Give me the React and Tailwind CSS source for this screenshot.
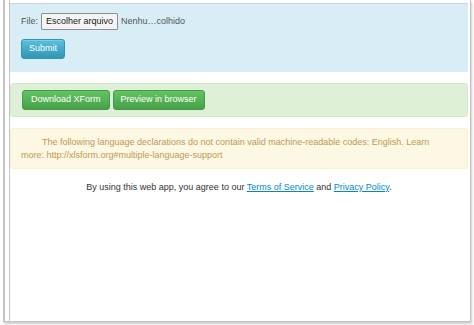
import React from 'react';

const font = { fontFamily: '"Liberation Sans", Arial, sans-serif' };

const App = () => {
  return (
    <div className="w-[474px] h-[325px] bg-white overflow-hidden" style={font}>
      {/* outer window frame */}
      <div className="ml-[3px] mr-[3px] h-[322px] border-l-2 border-r border-b border-[#c4c4c4] shadow-[1px_2px_2px_rgba(0,0,0,0.2)] pl-[4px]">
        <div className="h-full border-l border-[#c6c6c6] pt-[3px] pr-[2px]">
          {/* upload form */}
          <div className="bg-[#d9edf7] border-t border-[#cfd6da] pl-[11px] pt-[9px] pb-[13px]">
            <div className="flex items-center text-[9px] text-[#555]">
              <span className="mr-[3px]">File:</span>
              <span className="border border-[#8f8f8f] bg-[#f4f4f4] text-[#222] text-[9px] leading-none px-[4px] py-[3px] rounded-[1px]">
                Escolher arquivo
              </span>
              <span className="ml-[3px] text-[9px] text-[#555]">Nenhu…colhido</span>
            </div>
            <button className="mt-[9px] h-[20px] px-[7px] rounded-[3px] text-[9px] text-white bg-gradient-to-b from-[#5bc0de] to-[#2f96b4] border border-[#2f96b4] shadow-[inset_0_1px_0_rgba(255,255,255,0.2)]">
              Submit
            </button>
          </div>

          {/* download actions */}
          <div className="mt-[11px] bg-[#dff0d8] rounded-[3px] border border-[#d6e9c6] pl-[11px] py-[6px] flex gap-[3px]">
            <button className="h-[20px] px-[8px] rounded-[3px] text-[9px] text-white bg-gradient-to-b from-[#62c462] to-[#48a048] border border-[#439a43]">
              Download XForm
            </button>
            <button className="h-[20px] px-[7px] rounded-[3px] text-[9px] text-white bg-gradient-to-b from-[#62c462] to-[#48a048] border border-[#439a43]">
              Preview in browser
            </button>
          </div>

          {/* warning */}
          <div className="mt-[11px] bg-[#fcf8e3] border border-[#fbeed5] rounded-[3px] pl-[10px] pr-[30px] pt-[7px] pb-[6px] text-[9px] leading-[13px] text-[#c09853] indent-[21px]">
            The following language declarations do not contain valid machine-readable codes: English. Learn more: http://xlsform.org#multiple-language-support
          </div>

          {/* footer */}
          <p className="mt-[12px] text-center text-[9px] text-[#333]">
            By using this web app, you agree to our{' '}
            <a className="text-[#0088cc] underline">Terms of Service</a> and{' '}
            <a className="text-[#0088cc] underline">Privacy Policy</a>.
          </p>
        </div>
      </div>
    </div>
  );
};

export default App;
